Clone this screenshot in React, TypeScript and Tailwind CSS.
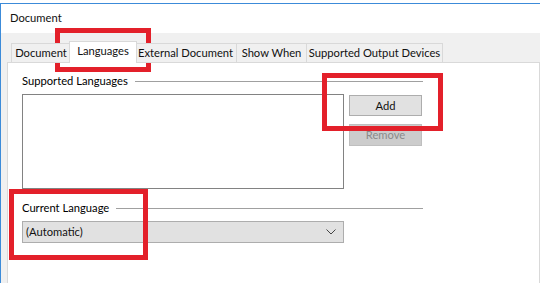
const tabs = [
  { label: 'Document', w: 'w-[60px]' },
  { label: 'Languages', w: 'w-[68px]', active: true },
  { label: 'External Document', w: 'w-[102px]' },
  { label: 'Show When', w: 'w-[70px]' },
  { label: 'Supported Output Devices', w: 'w-[136px]' },
]

function GroupHeader({ title }: { title: string }) {
  return (
    <div className="flex items-center h-[14px] w-[401px]">
      <span className="text-black leading-none whitespace-nowrap">{title}</span>
      <div className="h-px bg-[#a0a0a0] ml-[7px] flex-1" />
    </div>
  )
}

function RedBox({ className }: { className: string }) {
  return <div className={`absolute border-[5px] border-[#e3202a] pointer-events-none ${className}`} />
}

export default function App() {
  return (
    <div className="relative w-[540px] h-[283px] overflow-hidden bg-white font-['Lato',sans-serif] text-[11.2px] text-[#111]">
      <div className="h-[3px] bg-white" />
      <div className="h-[300px] border-t border-l border-[#3c8bd9] flex flex-col">
        <div className="h-[29px] bg-white pl-[9px] flex items-center">Document</div>
        <div className="flex-1 bg-[#f0f0f0] pl-[6px] pt-[8px] flex flex-col">
          <div className="flex items-end pl-[4px] h-[22px] relative z-10">
            {tabs.map((t, i) =>
              t.active ? (
                <div
                  key={t.label}
                  className={`${t.w} -mx-[2px] h-[22px] bg-white border border-b-0 border-[#d9d9d9] flex items-center justify-center pb-[3px] whitespace-nowrap relative z-10`}
                >
                  {t.label}
                </div>
              ) : (
                <div
                  key={t.label}
                  className={`${t.w} h-[20px] bg-[#f0f0f0] border-t border-r border-b border-[#d9d9d9] ${
                    i === 0 ? 'border-l' : ''
                  } flex items-center justify-center whitespace-nowrap`}
                >
                  {t.label}
                </div>
              )
            )}
          </div>
          <div className="flex-1 -mt-px bg-white border border-b-0 border-[#d9d9d9] pl-[14px] pt-[11px]">
            <GroupHeader title="Supported Languages" />
            <div className="flex gap-[5px] mt-[6px]">
              <div className="w-[322px] h-[95px] border border-[#828282] bg-white" />
              <div className="flex flex-col gap-[8px] pt-[1px]">
                <button className="w-[73px] h-[21px] bg-[#e1e1e1] border border-[#adadad] leading-none">Add</button>
                <button className="w-[73px] h-[22px] bg-[#cccccc] border border-[#bfbfbf] text-[#8a8a8a] leading-none">
                  Remove
                </button>
              </div>
            </div>
            <div className="mt-[12px]">
              <GroupHeader title="Current Language" />
            </div>
            <div className="mt-[6px] w-[322px] h-[22px] bg-[#e1e1e1] border border-[#adadad] flex items-center justify-between pl-[3px] pr-[7px]">
              <span>(Automatic)</span>
              <svg width="10" height="6" viewBox="0 0 10 6" fill="none">
                <path d="M0.5 0.5 L5 5 L9.5 0.5" stroke="#444" strokeWidth="1" />
              </svg>
            </div>
          </div>
        </div>
      </div>
      <RedBox className="left-[55px] top-[28px] w-[96px] h-[44px]" />
      <RedBox className="left-[322px] top-[73px] w-[121px] h-[58px]" />
      <RedBox className="left-[9px] top-[189px] w-[139px] h-[71px]" />
    </div>
  )
}
